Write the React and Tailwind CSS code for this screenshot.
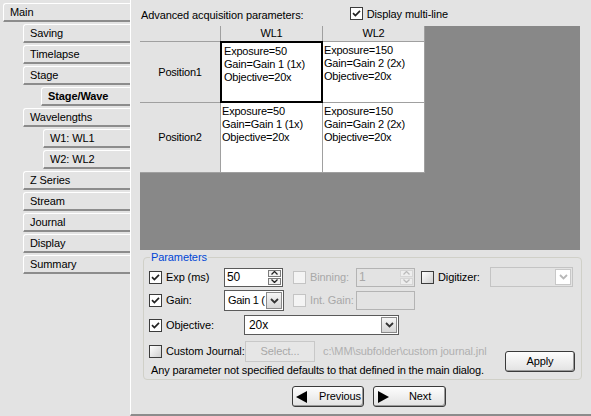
import React from 'react';

const FONT = { fontFamily: '"Liberation Sans", Arial, sans-serif' };

const tabs = [
  { label: 'Main', x: 'ml-[3px]' },
  { label: 'Saving', x: 'ml-[23px]' },
  { label: 'Timelapse', x: 'ml-[23px]' },
  { label: 'Stage', x: 'ml-[23px]' },
  { label: 'Stage/Wave', x: 'ml-[41px]', active: true },
  { label: 'Wavelengths', x: 'ml-[23px]' },
  { label: 'W1: WL1', x: 'ml-[43px]' },
  { label: 'W2: WL2', x: 'ml-[43px]' },
  { label: 'Z Series', x: 'ml-[23px]' },
  { label: 'Stream', x: 'ml-[23px]' },
  { label: 'Journal', x: 'ml-[23px]' },
  { label: 'Display', x: 'ml-[23px]' },
  { label: 'Summary', x: 'ml-[23px]' },
];

const cells = [
  ['Exposure=50', 'Gain=Gain 1 (1x)', 'Objective=20x'],
  ['Exposure=150', 'Gain=Gain 2 (2x)', 'Objective=20x'],
];

const Check = ({ checked, disabled }) => (
  <span
    className={`w-[13px] h-[13px] shrink-0 border flex items-center justify-center ${
      disabled
        ? 'border-[#c4c4c4] bg-[#f4f4f4]'
        : checked
        ? 'border-[#3c3c3c] bg-white'
        : 'border-[#3c3c3c] bg-linear-to-br from-white to-[#cfcfcf]'
    }`}
  >
    {checked && (
      <svg width="9" height="9" viewBox="0 0 9 9">
        <path d="M1 4.2 L3.4 6.6 L8 1.8" stroke="#222" strokeWidth="1.7" fill="none" />
      </svg>
    )}
  </span>
);

const Chevron = ({ color = '#333' }) => (
  <svg width="9" height="6" viewBox="0 0 9 6">
    <path d="M1 1 L4.5 4.5 L8 1" stroke={color} strokeWidth="1.8" fill="none" />
  </svg>
);

const DropBtn = ({ disabled }) => (
  <span
    className={`w-[16px] h-full shrink-0 flex items-center justify-center border ${
      disabled ? 'border-[#c8c8c8] bg-white' : 'border-[#8a8a8a] bg-linear-to-b from-[#f6f6f6] to-[#d6d6d6]'
    }`}
  >
    <Chevron color={disabled ? '#b8b8b8' : '#333'} />
  </span>
);

const Spin = ({ value, disabled }) => (
  <div
    className={`w-[59px] h-[19px] border flex ${
      disabled ? 'border-[#b4b4b4] bg-[#e3e3e3] text-[#a8a8a8]' : 'border-[#5a5a5a] bg-white text-black'
    }`}
  >
    <span className="flex-1 pl-[2px] leading-[17px] text-[12px]">{value}</span>
    <div className="w-[14px] flex flex-col gap-px py-px pr-px">
      {[0, 1].map((i) => (
        <span
          key={i}
          className={`flex-1 flex items-center justify-center border ${
            disabled ? 'border-[#d6d6d6] bg-[#eeeeee]' : 'border-[#7a7a7a] bg-[#f0f0f0]'
          }`}
        >
          <svg width="7" height="4" viewBox="0 0 7 4">
            <path
              d={i === 0 ? 'M0.5 3.5 L3.5 0.5 L6.5 3.5' : 'M0.5 0.5 L3.5 3.5 L6.5 0.5'}
              stroke={disabled ? '#bbb' : '#222'}
              strokeWidth="1.3"
              fill="none"
            />
          </svg>
        </span>
      ))}
    </div>
  </div>
);

const Button = ({ children, className = '', disabled }) => (
  <button
    className={`h-[21px] rounded-[3px] border flex items-center whitespace-nowrap ${
      disabled
        ? 'border-[#c8c8c8] bg-[#e6e6e6] text-[#a8a8a8] justify-center'
        : 'border-[#3a3a3a] bg-linear-to-b from-[#fdfdfd] to-[#e2e2e2] shadow-[inset_-1px_-1px_0_#9a9a9a] text-black'
    } ${className}`}
  >
    {children}
  </button>
);

export default function App() {
  return (
    <div
      className="w-[591px] h-[416px] bg-[#e3e3e3] flex text-[11px] tracking-[-0.1px] text-black overflow-hidden"
      style={FONT}
    >
      {/* Tabs */}
      <div className="w-[130px] shrink-0 flex flex-col pt-[3px]">
        {tabs.map((t) => (
          <div
            key={t.label}
            className={`${t.x} h-[19px] mb-[2px] border-t border-l border-white border-b-2 border-b-[#8c8c8c] rounded-tl-[3px] flex items-center pl-[6px] whitespace-nowrap ${
              t.active ? 'font-bold' : ''
            }`}
          >
            {t.label}
          </div>
        ))}
      </div>

      {/* Main panel */}
      <div className="flex-1 border-l border-white border-b-2 border-b-[#8c8c8c] flex flex-col">
        <div className="h-[26px] flex items-end">
          <span className="ml-[10px] mb-[3px]">Advanced acquisition parameters:</span>
          <label className="ml-auto mr-[143px] mb-[4px] flex items-center gap-[4px]">
            <Check checked />
            Display multi-line
          </label>
        </div>

        <div className="ml-[9px] w-[440px] h-[224px] bg-[#888888]">
          <div className="grid grid-cols-[80px_101px_101px] grid-rows-[15px_60px_69px] gap-px bg-[#a0a0a0] w-[285px] border-r border-b border-[#a0a0a0] tracking-[-0.2px]">
            <div className="bg-[#e3e3e3]" />
            <div className="bg-[#e3e3e3] flex items-center justify-center leading-none">WL1</div>
            <div className="bg-[#e3e3e3] flex items-center justify-center leading-none">WL2</div>
            {['Position1', 'Position2'].map((p, r) => (
              <React.Fragment key={p}>
                <div className="bg-[#e3e3e3] flex items-center justify-center">{p}</div>
                {cells.map((lines, c) => (
                  <div
                    key={c}
                    className={`bg-white leading-[13px] ${
                      r === 0 && c === 0 ? 'border-2 border-black -m-px pl-[2px] pt-[2px]' : 'pl-[1px] pt-[2px]'
                    }`}
                  >
                    {lines.map((l) => (
                      <div key={l} className="whitespace-nowrap">{l}</div>
                    ))}
                  </div>
                ))}
              </React.Fragment>
            ))}
          </div>
        </div>

        {/* Parameters group */}
        <fieldset className="ml-[12px] mt-px w-[439px] h-[129px] border border-[#d0d0c8] rounded-[4px] pl-[5px] pr-[6px] whitespace-nowrap">
          <legend className="ml-[1px] px-[1px] text-[#0046d5] leading-[13px]">Parameters</legend>

          <div className="flex items-center h-[20px] mt-[3px]">
            <label className="w-[75px] flex items-center gap-[4px]">
              <Check checked />Exp (ms)
            </label>
            <Spin value="50" />
            <label className="ml-[10px] w-[63px] flex items-center gap-[4px] text-[#a8a8a8]">
              <Check disabled />Binning:
            </label>
            <Spin value="1" disabled />
            <label className="ml-[6px] w-[69px] flex items-center gap-[4px]">
              <Check />Digitizer:
            </label>
            <div className="w-[83px] h-[20px] border border-[#c4c4c4] bg-[#e3e3e3] flex justify-end p-px">
              <DropBtn disabled />
            </div>
          </div>

          <div className="flex items-center h-[21px] mt-[3px]">
            <label className="w-[75px] flex items-center gap-[4px]">
              <Check checked />Gain:
            </label>
            <div className="w-[60px] h-[21px] border border-[#5a5a5a] bg-white flex items-stretch p-px">
              <span className="flex-1 pl-[2px] leading-[17px] overflow-hidden tracking-[-0.3px]">Gain 1 (</span>
              <DropBtn />
            </div>
            <label className="ml-[9px] w-[63px] flex items-center gap-[4px] text-[#a8a8a8]">
              <Check disabled />Int. Gain:
            </label>
            <div className="w-[59px] h-[19px] border border-[#b4b4b4] bg-[#e3e3e3]" />
          </div>

          <div className="flex items-center h-[20px] mt-[4px]">
            <label className="w-[95px] flex items-center gap-[4px]">
              <Check checked />Objective:
            </label>
            <div className="w-[155px] h-[20px] border border-[#5a5a5a] bg-white flex items-stretch p-px">
              <span className="flex-1 pl-[3px] leading-[16px] text-[12px]">20x</span>
              <DropBtn />
            </div>
          </div>

          <div className="flex">
            <div className="flex flex-col">
              <div className="flex items-center h-[20px] mt-[6px]">
                <label className="w-[96px] flex items-center gap-[4px]">
                  <Check />Custom Journal:
                </label>
                <Button disabled className="w-[70px] h-[20px] rounded-none">Select...</Button>
                <span className="ml-[8px] text-[#b0b0b0]">c:\MM\subfolder\custom journal.jnl</span>
              </div>
              <div className="ml-[2px] mt-[2px] leading-[14px] tracking-[-0.15px]">
                Any parameter not specified defaults to that defined in the main dialog.
              </div>
            </div>
            <Button className="ml-auto mt-[16px] w-[70px] justify-center">Apply</Button>
          </div>
        </fieldset>

        <div className="ml-[161px] mt-[6px] flex gap-[9px]">
          <Button className="w-[72px] pl-[3px] gap-[12px]">
            <svg width="11" height="12" viewBox="0 0 11 12"><path d="M11 0 L0 6 L11 12 Z" fill="#000" /></svg>
            Previous
          </Button>
          <Button className="w-[73px] pl-[4px] gap-[20px]">
            <svg width="11" height="12" viewBox="0 0 11 12"><path d="M0 0 L11 6 L0 12 Z" fill="#000" /></svg>
            Next
          </Button>
        </div>
      </div>
    </div>
  );
}
